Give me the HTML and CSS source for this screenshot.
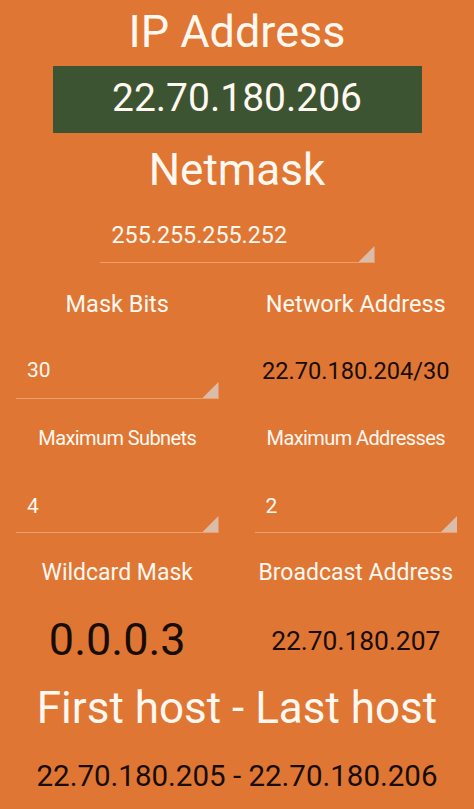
FILE: index.html
```html
<!DOCTYPE html>
<html><head><meta charset="UTF-8">
<meta name="viewport" content="initial-scale = 1.0, user-scalable = no">
<title>subnet calculator</title>
<link rel="stylesheet" href="styles.css">
</head>
<body>

<div class="screen">
  <div class="heading headingIp">IP Address</div>
  <div class="ipBox">22.70.180.206</div>
  <div class="heading headingMask">Netmask</div>
  <div class="spinner spinnerNetmask">255.255.255.252</div>

  <div class="pair pairBits">
    <div class="cell">
      <div class="label">Mask Bits</div>
      <div class="spinner">30</div>
    </div>
    <div class="cell">
      <div class="label">Network Address</div>
      <div class="value valueNetwork">22.70.180.204/30</div>
    </div>
  </div>

  <div class="pair pairMax">
    <div class="cell">
      <div class="label labelSmall">Maximum Subnets</div>
      <div class="spinner">4</div>
    </div>
    <div class="cell">
      <div class="label labelSmall">Maximum Addresses</div>
      <div class="spinner">2</div>
    </div>
  </div>

  <div class="pair pairWild">
    <div class="cell">
      <div class="label">Wildcard Mask</div>
      <div class="value valueWild">0.0.0.3</div>
    </div>
    <div class="cell">
      <div class="label">Broadcast Address</div>
      <div class="value valueBroadcast">22.70.180.207</div>
    </div>
  </div>

  <div class="heading headingHosts">First host - Last host</div>
  <div class="hostRange">22.70.180.205 - 22.70.180.206</div>
</div>

</body></html>
```

FILE: styles.css
```css
body {
  margin: 0;
  background-color: #df7634;
  font-family: Roboto, "Liberation Sans", sans-serif;
  color: #fff8f0;
}
.screen {
  display: flex;
  flex-direction: column;
  align-items: center;
  height: 809px;
  overflow: hidden;
}
.heading {
  font-size: 45px;
  line-height: 63px;
  text-align: center;
}
.headingMask {
  font-size: 44px;
  line-height: 74px;
}
.headingHosts {
  margin-top: 7px;
  font-size: 44px;
  line-height: 60px;
}
.ipBox {
  background-color: #3d5432;
  margin-top: 3px;
  width: 369px;
  height: 67px;
  padding-bottom: 2px;
  box-sizing: border-box;
  font-size: 39px;
  line-height: 65px;
  text-align: center;
}
.spinner {
  position: relative;
  box-sizing: border-box;
  width: 100%;
  padding: 26px 0 8px 11px;
  border-bottom: 1px solid #eaa071;
  font-size: 21px;
  line-height: 40px;
}
/* little corner arrow of the dropdown */
.spinner::after {
  content: "";
  position: absolute;
  right: 0;
  bottom: 0;
  width: 16px;
  height: 16px;
  background-color: #dbbca8;
  clip-path: polygon(100% 0, 100% 100%, 0 100%);
}
.spinnerNetmask {
  width: 275px;
  padding: 8px 0 7px 12px;
  font-size: 23.3px;
}
.pair {
  display: grid;
  grid-template-columns: 1fr 1fr;
  column-gap: 36px;
  width: 100%;
  padding: 0 17px 0 16px;
  box-sizing: border-box;
}
.cell {
  display: flex;
  flex-direction: column;
  align-items: center;
}
.label {
  font-size: 23.5px;
  line-height: 40px;
  white-space: nowrap;
}
.labelSmall {
  font-size: 20px;
  letter-spacing: -0.6px;
}
.pairBits {
  margin-top: 21px;
}
.pairMax {
  margin-top: 19px;
}
.pairMax .spinner {
  padding-top: 28px;
  padding-bottom: 6px;
}
.pairWild {
  margin-top: 20px;
}
.pairWild .label {
  font-size: 23px;
}
.value {
  color: #170c06;
  white-space: nowrap;
}
.valueNetwork {
  font-size: 23.6px;
  line-height: 40px;
  padding-top: 27px;
}
.valueWild {
  font-size: 45px;
  line-height: 60px;
  padding-top: 17px;
}
.valueBroadcast {
  font-size: 26.4px;
  line-height: 60px;
  padding-top: 18px;
}
.hostRange {
  margin-top: 18px;
  color: #170c06;
  font-size: 29.5px;
  line-height: 40px;
  white-space: nowrap;
}
```
